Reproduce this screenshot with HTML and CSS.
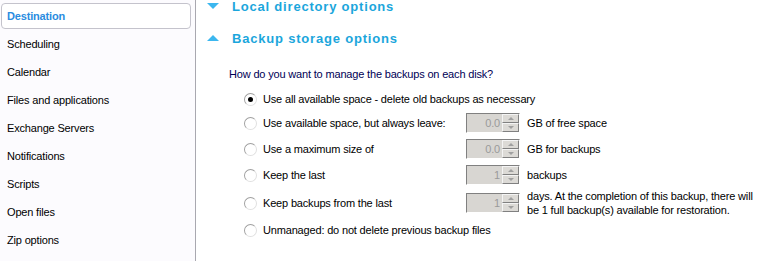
FILE: index.html
```html
<!DOCTYPE html>
<html lang="en">
<head>
    <meta charset="UTF-8">
    <title>Backup options</title>
    <link rel="stylesheet" href="styles.css">
</head>
<body>
    <div id="box">
        <div id="menu">
            <span class="on">Destination</span>
            <span>Scheduling</span>
            <span>Calendar</span>
            <span>Files and applications</span>
            <span>Exchange Servers</span>
            <span>Notifications</span>
            <span>Scripts</span>
            <span>Open files</span>
            <span>Zip options</span>
        </div>
        <div id="panel">
            <div class="head closed"><i class="arrow"></i>Local directory options</div>
            <div class="head open"><i class="arrow"></i>Backup storage options</div>
            <p class="question">How do you want to manage the backups on each disk?</p>
            <div class="opts">
                <div class="row first">
                    <span class="radio checked"></span>
                    <span class="label wide">Use all available space - delete old backups as necessary</span>
                </div>
                <div class="row">
                    <span class="radio"></span>
                    <span class="label">Use available space, but always leave:</span>
                    <span class="spin"><span class="val">0.0</span><span class="btns"><b class="up"></b><b class="down"></b></span></span>
                    <span class="unit">GB of free space</span>
                </div>
                <div class="row">
                    <span class="radio"></span>
                    <span class="label">Use a maximum size of</span>
                    <span class="spin"><span class="val">0.0</span><span class="btns"><b class="up"></b><b class="down"></b></span></span>
                    <span class="unit">GB for backups</span>
                </div>
                <div class="row before-tall">
                    <span class="radio"></span>
                    <span class="label">Keep the last</span>
                    <span class="spin"><span class="val">1</span><span class="btns"><b class="up"></b><b class="down"></b></span></span>
                    <span class="unit">backups</span>
                </div>
                <div class="row tall">
                    <span class="radio"></span>
                    <span class="label">Keep backups from the last</span>
                    <span class="spin"><span class="val">1</span><span class="btns"><b class="up"></b><b class="down"></b></span></span>
                    <span class="unit">days. At the completion of this backup, there will<br>be 1 full backup(s) available for restoration.</span>
                </div>
                <div class="row">
                    <span class="radio"></span>
                    <span class="label wide">Unmanaged: do not delete previous backup files</span>
                </div>
            </div>
        </div>
    </div>
</body>
</html>
```

FILE: styles.css
```css
body, div, p, span{
    margin:0;
    padding:0;
}
body{
    background:#fff;
    font-family:"Liberation Sans", Arial, sans-serif;
    font-size:11px;
    letter-spacing:-0.17px;
    color:#000;
}
#box{
    display:flex;
    height:261px;
    overflow:hidden;
}
#menu{
    width:195px;
    flex:none;
    padding-top:3px;
    background:#fcfbfe;
    border-right:1px solid #a9a8b0;
    display:flex;
    flex-direction:column;
}
#menu span{
    height:28px;
    line-height:27px;
    padding-left:7px;
}
#menu .on{
    height:24px;
    line-height:24px;
    margin:0 4px 2px 1px;
    padding-left:5px;
    background:#fff;
    border:1px solid #c4c3cc;
    border-radius:4px;
    font-weight:bold;
    color:#2a8ce0;
}
#panel{
    flex:1;
    padding-left:11px;
}
.head{
    display:flex;
    align-items:center;
    height:32px;
    font-size:13px;
    font-weight:bold;
    letter-spacing:0.8px;
    color:#1ba6dc;
}
.head.closed{
    margin-top:-10px;
}
.arrow{
    width:0;
    height:0;
    margin-right:13px;
    border-left:6px solid transparent;
    border-right:6px solid transparent;
}
.closed .arrow{
    border-top:6px solid #3cb7ef;
}
.open .arrow{
    border-bottom:6px solid #3cb7ef;
}
.question{
    margin:14px 0 0 22px;
    color:#000055;
}
.opts{
    margin:9px 0 0 37px;
}
.row{
    display:flex;
    align-items:flex-start;
    height:26px;
}
.row.first{
    height:24px;
}
.row.before-tall{
    height:28px;
}
.row.tall{
    height:27px;
}
.radio{
    width:11px;
    height:11px;
    margin-top:4px;
    flex:none;
    border-radius:50%;
    border:1px solid #a0a0a0;
    border-right-color:#e0e0e0;
    border-bottom-color:#e0e0e0;
    background:#fff;
    position:relative;
}
.radio.checked::after{
    content:"";
    position:absolute;
    left:3px;
    top:3px;
    width:5px;
    height:5px;
    border-radius:50%;
    background:#000;
}
.label{
    margin-left:6px;
    width:203px;
    line-height:20px;
}
.label.wide{
    width:auto;
}
.spin{
    display:flex;
    width:54px;
    height:20px;
    flex:none;
    box-sizing:border-box;
    border:1px solid #fff;
    border-top-color:#808080;
    border-left-color:#808080;
    background:#d8d6d2;
}
.val{
    flex:1;
    text-align:right;
    padding-right:2px;
    line-height:18px;
    color:#9a9a9a;
}
.btns{
    width:17px;
    display:flex;
    flex-direction:column;
}
.btns b{
    flex:1;
    position:relative;
    border:1px solid #f4f4f4;
    border-right-color:#808080;
    border-bottom-color:#808080;
    background:#dcdad6;
}
.btns b::after{
    content:"";
    position:absolute;
    left:5px;
    top:2px;
    border-left:3px solid transparent;
    border-right:3px solid transparent;
}
.btns .up::after{
    border-bottom:3px solid #a0a0a0;
}
.btns .down::after{
    border-top:3px solid #a0a0a0;
}
.unit{
    margin-left:7px;
    line-height:14px;
    padding-top:3px;
}
.tall .unit{
    padding-top:0;
    margin-top:-4px;
}
```
